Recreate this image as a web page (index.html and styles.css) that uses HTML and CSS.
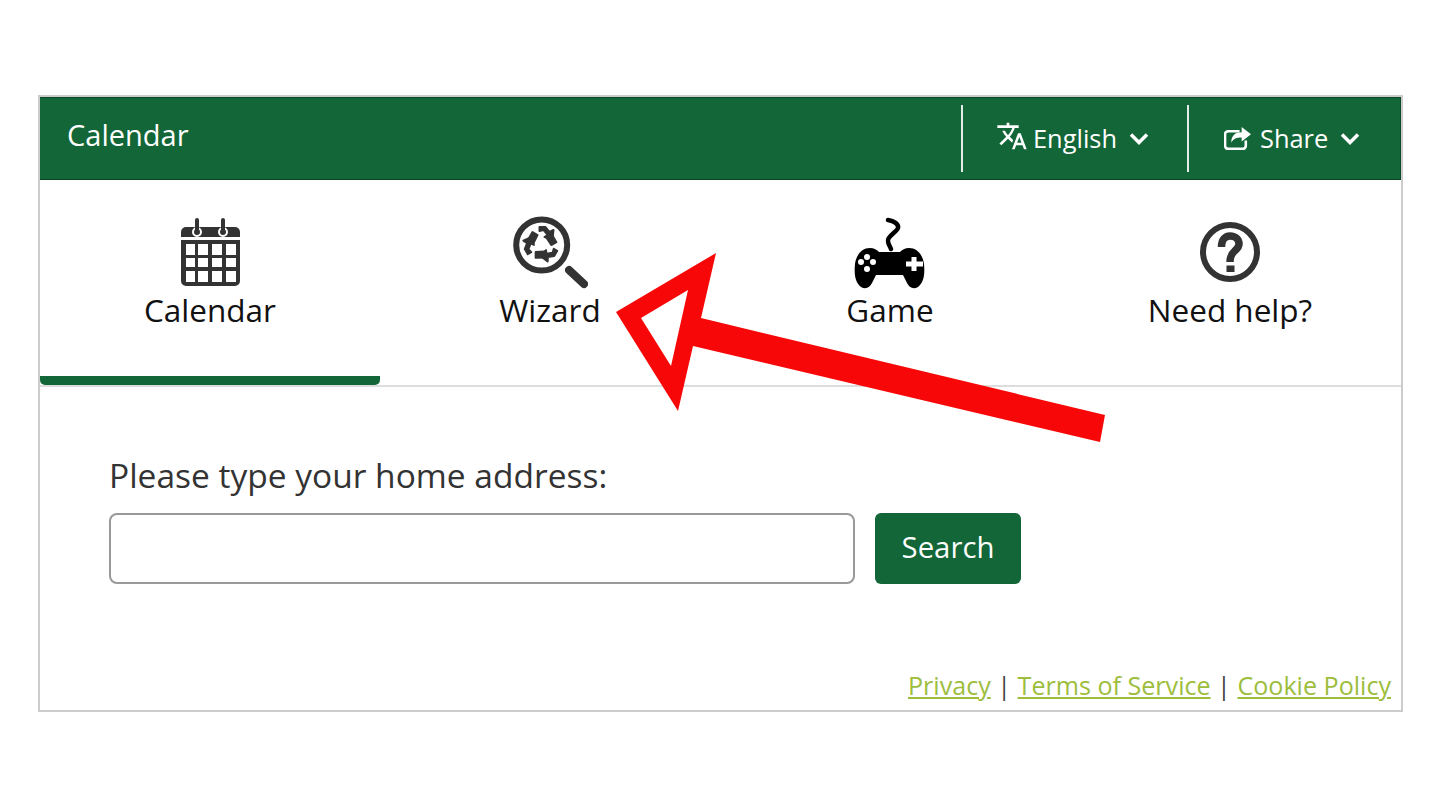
FILE: index.html
```html
<!DOCTYPE html>
<html lang="en">
<head>
    <meta charset="UTF-8">
    <meta name="viewport" content="width=device-width, initial-scale=1.0">
    <title>Calendar</title>
    <link rel="stylesheet" href="styles.css">
</head>
<body>

    <div class="widget">
        <header class="topbar">
            <div class="topbar-title">Calendar</div>
            <div class="topbar-item lang">
                <svg class="lang-icon" viewBox="0 0 24 24"><path d="M12.87 15.07l-2.54-2.51.03-.03c1.74-1.94 2.98-4.17 3.71-6.53H17V4h-7V2H8v2H1v1.99h11.17C11.5 7.92 10.44 9.75 9 11.35 8.07 10.32 7.3 9.19 6.69 8h-2c.73 1.63 1.73 3.17 2.98 4.56l-5.09 5.02L4 19l5-5 3.11 3.11.76-2.04zM18.5 10h-2L12 22h2l1.12-3h4.75L21 22h2l-4.5-12zm-2.62 7l1.62-4.33L19.12 17h-3.24z"/></svg>
                <span>English</span>
                <svg class="chevron" viewBox="0 0 20 13"><path d="M2 2.5l8 8 8-8"/></svg>
            </div>
            <div class="topbar-item share">
                <svg class="share-icon" viewBox="0 0 26 22">
                    <path class="share-box" d="M15 4H4a3 3 0 0 0-3 3v11a3 3 0 0 0 3 3h14a3 3 0 0 0 3-3v-5"/>
                    <path d="M17 0l9 7-9 7v-4c-5 0-8 1-10 5 0-7 4-10 10-10z"/>
                </svg>
                <span>Share</span>
                <svg class="chevron" viewBox="0 0 20 13"><path d="M2 2.5l8 8 8-8"/></svg>
            </div>
        </header>

        <nav class="tabs">
            <div class="tab active">
                <svg class="tab-icon" viewBox="0 0 76 76">
                    <path class="ink" d="M9 16a5 5 0 0 1 5-5h49a5 5 0 0 1 5 5v5H9z"/>
                    <path class="ink" fill-rule="evenodd" d="M9 24h59v41a5 5 0 0 1-5 5H14a5 5 0 0 1-5-5zM14 28v11h9V28zM26 28v11h10V28zM40 28v11h10V28zM54 28v11h10V28zM14 42v9h9v-9zM26 42v9h10v-9zM40 42v9h10v-9zM54 42v9h10v-9zM14 55v11h9V55zM26 55v11h10V55zM40 55v11h10V55zM54 55v11h10V55z"/>
                    <circle class="ring" cx="25" cy="16" r="4"/>
                    <circle class="ring" cx="51" cy="16" r="4"/>
                    <path class="pin" d="M25 4v12M51 4v12"/>
                </svg>
                <span>Calendar</span>
            </div>
            <div class="tab">
                <svg class="tab-icon" viewBox="0 0 76 76">
                    <circle class="lens" cx="29.700" cy="29" r="25.500"/>
                    <path class="handle" d="M57 54l15 14"/>
                    <g class="recycle" transform="translate(29.500 28)">
                        <g id="recycle-arm">
                            <path d="M-14-3L-9-12-4-9-8-1z"/>
                            <path d="M-2-17H4L8-12 12-14 11-5 3-7 6-9 2-14-2-13z"/>
                        </g>
                        <use href="#recycle-arm" transform="rotate(120)"/>
                        <use href="#recycle-arm" transform="rotate(240)"/>
                    </g>
                </svg>
                <span>Wizard</span>
            </div>
            <div class="tab">
                <svg class="tab-icon" viewBox="0 0 76 76">
                    <path class="wire" d="M36 4C42 5 47 8 46 12 45 16 35 20 36 25 36 28 38 30 39 33"/>
                    <path d="M18 32C22 32 25 34 27 36H48C50 34 53 32 57 32 66 32 71 40 72 48 73 58 72 66 66 71 61 74 57 71 55 67L51 59H24L20 67C18 71 14 74 9 71 3 66 2 58 3 48 4 40 9 32 18 32Z"/>
                    <g class="pad">
                        <circle cx="9" cy="46" r="3"/>
                        <circle cx="15" cy="41" r="3"/>
                        <circle cx="21" cy="46" r="3"/>
                        <circle cx="15" cy="53" r="3"/>
                        <path d="M54 45.500h5.500V41h5v4.500H71v5h-6.500V55h-5v-4.500H54z"/>
                    </g>
                </svg>
                <span>Game</span>
            </div>
            <div class="tab">
                <svg class="tab-icon" viewBox="0 0 76 76">
                    <circle class="lens" cx="38" cy="36" r="27"/>
                    <path class="qmark" d="M29.500 31C29.500 24 33 20 38 20 44 20 47 24 47 28 47 35 38 34 38 46"/>
                    <rect class="ink" x="34.500" y="49.500" width="8" height="6.500"/>
                </svg>
                <span>Need help?</span>
            </div>
        </nav>

        <section class="search">
            <label class="search-label" for="address">Please type your home address:</label>
            <div class="search-row">
                <input class="search-input" id="address" type="text">
                <button class="search-btn" type="button">Search</button>
            </div>
        </section>

        <footer class="legal">
            <a href="#">Privacy</a> | <a href="#">Terms of Service</a> | <a href="#">Cookie Policy</a>
        </footer>
    </div>

    <!-- red annotation drawn over the screenshot -->
    <svg class="annotation" viewBox="0 0 1440 810">
        <path fill-rule="evenodd" d="M616 312L716 253 701 318 1105 415 1100 442 693 346 678 411zM688 290L641 318 671 366z"/>
    </svg>

</body>
</html>
```

FILE: styles.css
```css
body {
    font-family: 'Open Sans', sans-serif;
    background-color: #fff;
    color: #333;
    margin: 0;
    padding: 95px 37px 0 38px;
}
.widget {
    height: 613px;
    border: 2px solid #ccc;
    display: flex;
    flex-direction: column;
}
.topbar {
    height: 82px;
    background-color: #126637;
    border-bottom: 1px solid #0c3f23;
    box-shadow: inset -1px 1px 0 #0d4a28;
    color: #fff;
    display: flex;
    align-items: center;
}
.topbar-title {
    flex: 1;
    font-size: 29px;
    padding-left: 27px;
    padding-bottom: 7px;
}
.topbar-item {
    height: 67px;
    border-left: 2px solid #e4ece7;
    display: flex;
    align-items: center;
    font-size: 25.400px;
    box-sizing: border-box;
}
.lang {
    width: 226px;
    padding-left: 33px;
}
.share {
    width: 214px;
    padding-left: 35px;
}
.lang-icon {
    width: 32px;
    height: 32px;
    fill: #fff;
    margin-right: 5px;
    margin-top: -4px;
}
.share-icon {
    width: 27px;
    height: 23px;
    fill: #fff;
    margin-right: 9px;
}
.share-box {
    fill: none;
    stroke: #fff;
    stroke-width: 2.5;
}
.chevron {
    width: 20px;
    height: 13px;
    margin-left: 12px;
    fill: none;
    stroke: #fff;
    stroke-width: 3.500;
}
.tabs {
    height: 207px;
    display: flex;
    border-bottom: 2px solid #ddd;
    box-sizing: border-box;
}
.tab {
    width: 340px;
    position: relative;
    display: flex;
    flex-direction: column;
    align-items: center;
    font-size: 31.500px;
    color: #111;
    padding-top: 36px;
    box-sizing: border-box;
}
.tab-icon {
    width: 76px;
    height: 76px;
    margin-bottom: -4px;
    fill: #000;
}
.tab.active::after {
    content: "";
    position: absolute;
    left: 0;
    right: 0;
    bottom: 0;
    height: 9px;
    background-color: #126637;
    border-radius: 0 0 5px 5px;
}
.ink {
    fill: #333;
}
.recycle {
    fill: #333;
    stroke: #333;
    stroke-width: 2;
    stroke-linejoin: round;
}
.ring {
    fill: none;
    stroke: #fff;
    stroke-width: 2;
}
.pin {
    stroke: #333;
    stroke-width: 4;
    stroke-linecap: round;
    fill: none;
}
.lens {
    fill: none;
    stroke: #333;
    stroke-width: 6;
}
.handle {
    stroke: #333;
    stroke-width: 8;
    stroke-linecap: round;
}
.wire {
    fill: none;
    stroke: #000;
    stroke-width: 4.500;
    stroke-linecap: round;
}
.pad {
    fill: #fff;
}
.qmark {
    fill: none;
    stroke: #333;
    stroke-width: 7.500;
}
.search {
    padding: 66px 0 0 69px;
}
.search-label {
    display: block;
    font-size: 33.500px;
    line-height: 44px;
    margin-bottom: 16px;
}
.search-row {
    display: flex;
    gap: 20px;
}
.search-input {
    width: 746px;
    height: 71px;
    border: 2px solid #999;
    border-radius: 8px;
    box-sizing: border-box;
    background-color: #fff;
}
.search-btn {
    width: 146px;
    height: 71px;
    background-color: #126637;
    color: #fff;
    font-family: 'Open Sans', sans-serif;
    font-size: 29.300px;
    border: none;
    border-radius: 6px;
    padding: 0 0 3px;
}
.legal {
    margin-top: auto;
    padding: 0 10px 8px 0;
    text-align: right;
    font-size: 25.100px;
    color: #444;
}
.legal a {
    color: #9dbd3c;
}
.annotation {
    position: absolute;
    left: 0;
    top: 0;
    width: 1440px;
    height: 810px;
    fill: #f70707;
    pointer-events: none;
}
```
